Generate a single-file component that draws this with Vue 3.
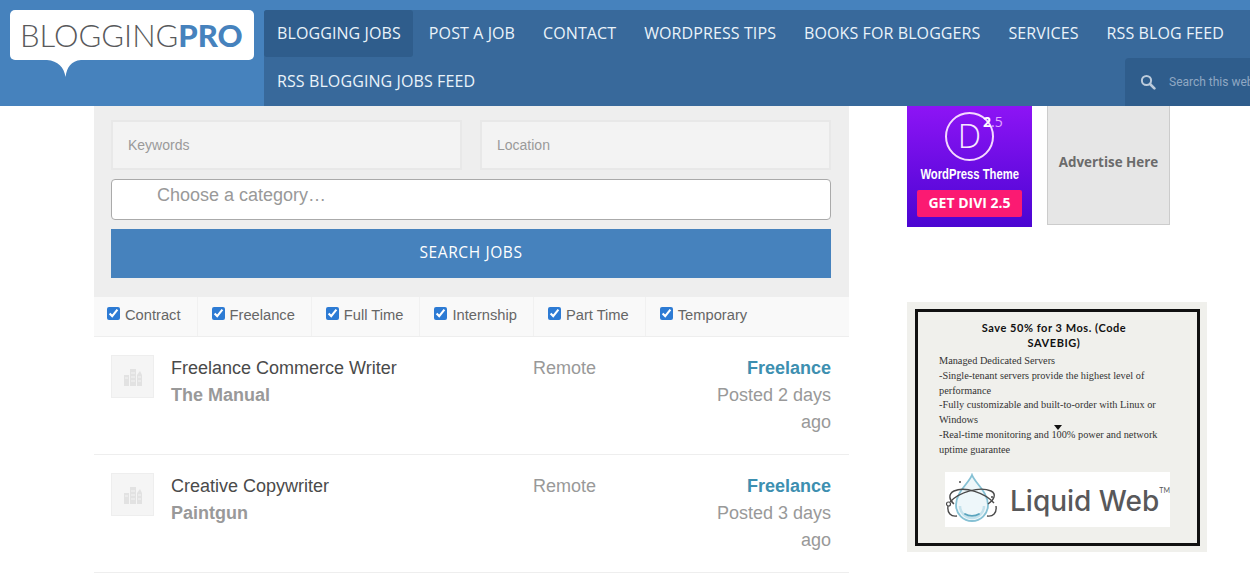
<template>
  <div class="page">
    <header class="top-bar">
      <a class="logo">
        <span class="logo-thin">BLOGGING</span><span class="logo-bold">PRO</span>
        <svg class="logo-tail" width="34" height="18" viewBox="0 0 34 18">
          <path d="M0 0C11 1 17 7 18.5 17 20 7 24 1 34 0z" fill="#fff" />
        </svg>
      </a>
      <nav class="main-nav">
        <a
          v-for="(item, index) in navItems"
          :key="item"
          class="nav-link"
          :class="{ active: index === 0 }"
        >{{ item }}</a>
        <div class="nav-search">
          <svg width="16" height="16" viewBox="0 0 16 16" fill="none">
            <circle cx="6.5" cy="6.5" r="4.6" stroke="#bccbdb" stroke-width="2" />
            <path d="M10 10l4.4 4.4" stroke="#bccbdb" stroke-width="2.6" stroke-linecap="round" />
          </svg>
          <span>Search this website...</span>
        </div>
      </nav>
    </header>

    <main class="content">
      <section class="jobs-col">
        <form class="search-panel" @submit.prevent>
          <div class="input-row">
            <input type="text" placeholder="Keywords" />
            <input type="text" placeholder="Location" />
          </div>
          <div class="category">Choose a category…</div>
          <button class="search-btn" type="submit">SEARCH JOBS</button>
        </form>

        <ul class="filters">
          <li v-for="type in jobTypes" :key="type">
            <label><input type="checkbox" checked />{{ type }}</label>
          </li>
        </ul>

        <article class="job" v-for="job in jobs" :key="job.title">
          <div class="job-logo">
            <svg width="20" height="20" viewBox="0 0 20 20" fill="#e2e2e2">
              <rect x="1" y="8" width="5" height="11" />
              <rect x="7" y="2" width="6" height="17" />
              <path d="M14 19V8l3-4 2 4v11z" />
              <path d="M2 11h3M8 6h4M8 10h4M8 14h4M15 10h3M15 14h3" stroke="#f4f4f4" stroke-width="1" />
            </svg>
          </div>
          <div class="job-main">
            <h3>{{ job.title }}</h3>
            <strong>{{ job.company }}</strong>
          </div>
          <div class="job-place">{{ job.place }}</div>
          <div class="job-meta">
            <b>{{ job.type }}</b>
            <span>{{ job.posted }}</span>
          </div>
        </article>
      </section>

      <aside class="sidebar">
        <div class="ad-row">
          <div class="divi-ad">
            <div class="divi-mark">
              <span class="divi-d">D</span>
              <span class="divi-ver"><b>2</b>.5</span>
            </div>
            <div class="divi-title">WordPress Theme</div>
            <div class="divi-btn">GET DIVI 2.5</div>
          </div>
          <div class="advertise">Advertise Here</div>
        </div>

        <div class="host-ad">
          <div class="host-inner">
            <h4>Save 50% for 3 Mos. (Code SAVEBIG)</h4>
            <p>
              Managed Dedicated Servers<br />
              -Single-tenant servers provide the highest level of performance<br />
              -Fully customizable and built-to-order with Linux or Windows<br />
              -Real-time monitoring and 100% power and network uptime guarantee
            </p>
            <i class="host-arrow"></i>
            <div class="liquid">
              <svg width="54" height="54" viewBox="0 0 54 54" fill="none">
                <path d="M27 2C24 10 11 19 11 32a16 16 0 0 0 32 0C43 19 30 10 27 2z" fill="#eef7fa" stroke="#86c1d4" stroke-width="1.8" />
                <path d="M15 33a12 12 0 0 0 24 0" stroke="#c4e2ec" stroke-width="2.5" />
                <path d="M20 41c4 2.4 10 2.4 14 0" stroke="#5aa4bd" stroke-width="1.8" stroke-linecap="round" />
                <path d="M5 29C14 19 35 13 46 18c6 3 3 9-3 13" stroke="#4a4a4a" stroke-width="1.4" />
                <path d="M49 30C40 20 20 13 9 18c-6 3-5 9 0 13" stroke="#4a4a4a" stroke-width="1.4" />
                <path d="M3 33c-1 7 3 11 9 10M51 33c1 7-3 11-9 10" stroke="#4a4a4a" stroke-width="1.4" />
                <circle cx="3.5" cy="31" r="2" fill="#fff" stroke="#4a4a4a" stroke-width="1.2" />
                <circle cx="15" cy="9" r="1" fill="#4a4a4a" />
                <circle cx="47" cy="24" r="1" fill="#4a4a4a" />
              </svg>
              <span class="liquid-name">Liquid Web</span><sup>TM</sup>
            </div>
          </div>
        </div>
      </aside>
    </main>
  </div>
</template>

<script setup>
const navItems = [
  'Blogging Jobs',
  'Post a Job',
  'Contact',
  'WordPress Tips',
  'Books for Bloggers',
  'Services',
  'RSS Blog Feed',
  'RSS Blogging Jobs Feed'
]

const jobTypes = ['Contract', 'Freelance', 'Full Time', 'Internship', 'Part Time', 'Temporary']

const jobs = [
  { title: 'Freelance Commerce Writer', company: 'The Manual', place: 'Remote', type: 'Freelance', posted: 'Posted 2 days ago' },
  { title: 'Creative Copywriter', company: 'Paintgun', place: 'Remote', type: 'Freelance', posted: 'Posted 3 days ago' }
]
</script>

<style>
html, body {
  overflow: hidden;
  background: #fff;
}
</style>

<style scoped>
.page {
  font-family: "Liberation Sans", Arial, sans-serif;
  color: #333;
  height: 580px;
  overflow: hidden;
}

.top-bar {
  display: flex;
  height: 106px;
  background: #4682bd;
  padding: 10px 0 0 10px;
  box-sizing: border-box;
}

.logo {
  position: relative;
  width: 244px;
  height: 50px;
  background: #fff;
  border-radius: 5px;
  box-sizing: border-box;
  padding-left: 10px;
  font-family: Lato, sans-serif;
  font-size: 31px;
  line-height: 50px;
  white-space: nowrap;
  color: #58595b;
}

.logo-tail {
  position: absolute;
  left: 37px;
  top: 50px;
}

.logo-thin {
  font-weight: 300;
}

.logo-bold {
  font-weight: 900;
  color: #4682bd;
}

.main-nav {
  position: relative;
  display: flex;
  flex-wrap: wrap;
  align-content: flex-start;
  gap: 0 3px;
  width: 986px;
  height: 96px;
  margin-left: 10px;
  background: #38699b;
  border-radius: 3px 0 0 0;
  font-family: "Open Sans", sans-serif;
  font-size: 16px;
  letter-spacing: 0.1px;
}

.nav-link {
  height: 47px;
  margin-bottom: 1px;
  padding: 0 12px 0 13px;
  line-height: 46px;
  color: #eaf3fa;
  text-transform: uppercase;
  white-space: nowrap;
  border-radius: 3px;
}

.nav-link.active {
  background: #2f5d8c;
}

.nav-search {
  position: absolute;
  left: 861px;
  top: 48px;
  width: 125px;
  height: 48px;
  box-sizing: border-box;
  padding-left: 15px;
  display: flex;
  align-items: center;
  gap: 13px;
  background: #2f5d8c;
  border-radius: 4px 0 0 0;
  overflow: hidden;
  font-family: Roboto, sans-serif;
  font-size: 12px;
  letter-spacing: 0;
  color: #8fa8c3;
  white-space: nowrap;
}

.nav-search svg {
  flex: none;
}

.content {
  display: flex;
  gap: 58px;
  padding-left: 94px;
}

.jobs-col {
  width: 755px;
  flex: none;
}

.search-panel {
  background: #eeeeee;
  padding: 14px 18px 19px 17px;
}

.input-row {
  display: flex;
  gap: 18px;
}

.input-row input {
  flex: 1;
  min-width: 0;
  height: 50px;
  box-sizing: border-box;
  border: 2px solid #e8e8e8;
  background: #f3f3f3;
  padding: 0 15px;
  font-family: inherit;
  font-size: 14px;
  outline: none;
}

.input-row input::placeholder {
  color: #9a9a9a;
  opacity: 1;
}

.category {
  height: 41px;
  margin-top: 9px;
  box-sizing: border-box;
  border: 1px solid #aaa;
  border-radius: 4px;
  background: #fff;
  padding-left: 45px;
  line-height: 30px;
  font-size: 18px;
  color: #999;
}

.search-btn {
  display: block;
  width: 100%;
  height: 49px;
  margin-top: 9px;
  padding: 0 0 4px;
  border: none;
  background: #4682bd;
  color: #fff;
  font-family: "Open Sans", sans-serif;
  font-size: 15.5px;
  letter-spacing: 0.6px;
}

.filters {
  display: flex;
  list-style: none;
  margin: 0;
  padding: 0;
  height: 40px;
  background: #f9f9f9;
  border-bottom: 1px solid #eee;
  box-sizing: border-box;
  font-size: 14.7px;
  color: #666;
}

.filters li {
  padding: 0 16px 0 14px;
  border-right: 1px solid #f1f1f1;
  line-height: 37px;
}

.filters li:first-child {
  padding-left: 13px;
}

.filters li:last-child {
  border-right: none;
}

.filters input {
  width: 13px;
  height: 13px;
  margin: 0 5px 0 0;
  accent-color: #2d7bd4;
}

.job {
  display: grid;
  grid-template-columns: 43px 379px 167px 131px;
  height: 118px;
  box-sizing: border-box;
  padding: 18px 18px 0 17px;
  border-bottom: 1px solid #eee;
  font-size: 18px;
  line-height: 27px;
}

.job-logo {
  width: 43px;
  height: 43px;
  box-sizing: border-box;
  background: #f5f5f5;
  border: 1px solid #eee;
  display: flex;
  align-items: center;
  justify-content: center;
}

.job-main {
  margin-left: 17px;
}

.job-main h3 {
  margin: 0;
  font-size: 18px;
  font-weight: 400;
  color: #4a4a4a;
}

.job-main strong {
  color: #999;
}

.job-place {
  color: #999;
}

.job-meta {
  text-align: right;
  color: #999;
}

.job-meta b {
  display: block;
  color: #3d8fb0;
}

.sidebar {
  width: 300px;
  flex: none;
}

.ad-row {
  display: flex;
  align-items: flex-start;
  gap: 15px;
}

.divi-ad {
  width: 125px;
  height: 121px;
  box-sizing: border-box;
  background: linear-gradient(#8d14f5, #4a05d2);
  color: #fff;
  display: flex;
  flex-direction: column;
  align-items: center;
  padding-top: 6px;
}

.divi-mark {
  position: relative;
  width: 49px;
  height: 49px;
  box-sizing: border-box;
  border: 2px solid #f5d9ff;
  border-radius: 50%;
  text-align: center;
  font-family: "Open Sans", sans-serif;
  font-size: 33px;
  line-height: 44px;
  font-weight: 300;
  color: #f8e8ff;
}

.divi-ver {
  position: absolute;
  left: 36px;
  top: 0;
  font-size: 14px;
  line-height: 16px;
  font-weight: 400;
  color: #e2a8ff;
}

.divi-ver b {
  color: #fff;
  font-weight: 700;
}

.divi-title {
  margin-top: 5px;
  font-weight: 700;
  font-size: 15px;
  line-height: 16px;
  white-space: nowrap;
  transform: scaleX(0.75);
}

.divi-btn {
  width: 105px;
  height: 27px;
  margin-top: 8px;
  border-radius: 2px;
  background: #fb1a72;
  text-align: center;
  font-family: "Open Sans", sans-serif;
  font-weight: 700;
  font-size: 14px;
  line-height: 26px;
}

.advertise {
  width: 123px;
  height: 119px;
  box-sizing: border-box;
  background: #e6e6e6;
  border: 1px solid #ccc;
  border-top: none;
  display: flex;
  align-items: center;
  justify-content: center;
  font-family: "Open Sans", sans-serif;
  font-weight: 700;
  font-size: 13.4px;
  color: #6b6b6b;
  padding-bottom: 6px;
}

.host-ad {
  width: 300px;
  height: 250px;
  margin-top: 75px;
  box-sizing: border-box;
  background: #f0f0ec;
  padding: 7px 7px 6px 8px;
}

.host-inner {
  position: relative;
  height: 100%;
  box-sizing: border-box;
  border: 3px solid #111;
  padding: 8px 20px 0 21px;
}

.host-inner h4 {
  margin: 0 0 4px 25px;
  width: 180px;
  font-family: Lato, sans-serif;
  font-size: 11px;
  letter-spacing: 0.55px;
  line-height: 15px;
  font-weight: 700;
  text-align: center;
  color: #111;
}

.host-inner p {
  margin: 0;
  font-family: "Liberation Serif", serif;
  font-size: 10.3px;
  line-height: 14.8px;
  color: #333;
}

.host-arrow {
  position: absolute;
  left: 136px;
  top: 113px;
  border-left: 4px solid transparent;
  border-right: 4px solid transparent;
  border-top: 5px solid #111;
}

.liquid {
  position: absolute;
  left: 27px;
  top: 160px;
  width: 225px;
  height: 55px;
  background: #fff;
  display: flex;
  align-items: center;
  color: #58585a;
}

.liquid-name {
  margin: 3px 0 0 11px;
  font-family: Inter, sans-serif;
  font-weight: 500;
  font-size: 28px;
  white-space: nowrap;
}

.liquid sup {
  font-family: Lato, sans-serif;
  font-size: 7px;
  align-self: flex-start;
  margin-top: 14px;
}
</style>
